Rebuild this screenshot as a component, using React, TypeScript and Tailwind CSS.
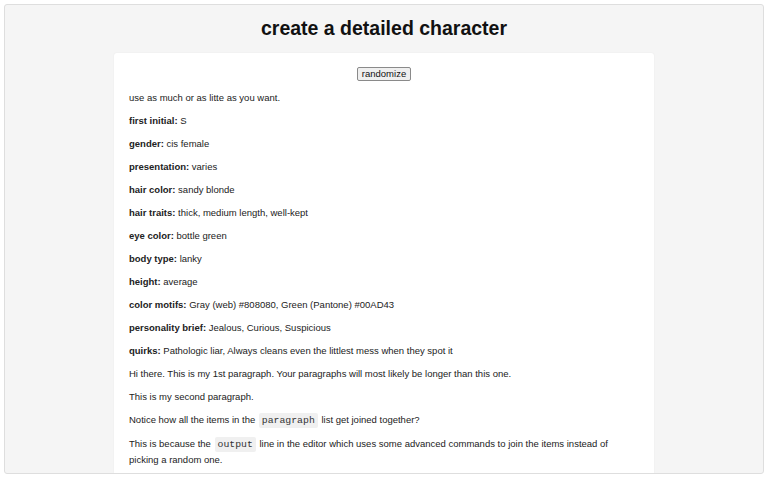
const traits = [
  { label: "first initial:", value: "S" },
  { label: "gender:", value: "cis female" },
  { label: "presentation:", value: "varies" },
  { label: "hair color:", value: "sandy blonde" },
  { label: "hair traits:", value: "thick, medium length, well-kept" },
  { label: "eye color:", value: "bottle green" },
  { label: "body type:", value: "lanky" },
  { label: "height:", value: "average" },
  { label: "color motifs:", value: "Gray (web) #808080, Green (Pantone) #00AD43" },
  { label: "personality brief:", value: "Jealous, Curious, Suspicious" },
  { label: "quirks:", value: "Pathologic liar, Always cleans even the littlest mess when they spot it" },
];

function Code({ children }: { children: React.ReactNode }) {
  return (
    <code className="mx-[1px] inline-block rounded-[2px] bg-[#f0f0f0] px-[3px] font-['Liberation_Mono',monospace] text-[9.8px] leading-[15px] text-[#333]">
      {children}
    </code>
  );
}

export default function App() {
  return (
    <div className="min-h-screen bg-white p-1 font-['Liberation_Sans',Arial,sans-serif] text-[#222]">
      <div className="flex h-[470px] flex-col items-center overflow-hidden rounded-[3px] border border-[#dedede] bg-[#f5f5f5] pt-[12px]">
        <h1 className="text-[19.5px] font-bold leading-[22px] text-[#111]">
          create a detailed character
        </h1>
        <div className="mt-[14px] w-[540px] flex-1 rounded-t-[3px] bg-white px-[15px] pt-[14px] shadow-[0_0_2px_rgba(0,0,0,0.06)]">
          <div className="flex justify-center">
            <button
              type="button"
              className="h-[14px] rounded-[2px] border border-[#8a8a8a] bg-[#efefef] px-[4px] text-[9.5px] leading-[12px] text-[#111]"
            >
              randomize
            </button>
          </div>
          <div className="mt-[9px] space-y-[8px] text-[9.5px] leading-[15px]">
            <p>use as much or as litte as you want.</p>
            {traits.map((t) => (
              <p key={t.label}>
                <b>{t.label}</b> {t.value}
              </p>
            ))}
            <p>
              Hi there. This is my 1st paragraph. Your paragraphs will most likely be
              longer than this one.
            </p>
            <p>This is my second paragraph.</p>
            <p>
              Notice how all the items in the <Code>paragraph</Code> list get joined
              together?
            </p>
            <p>
              This is because the <Code>output</Code> line in the editor which uses
              some advanced commands to join the items instead of picking a random one.
            </p>
          </div>
        </div>
      </div>
    </div>
  );
}
